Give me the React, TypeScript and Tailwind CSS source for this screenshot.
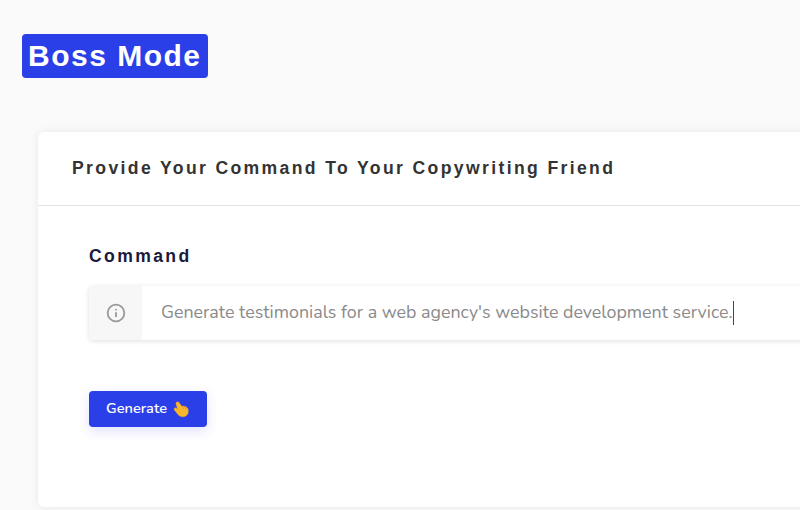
import { Info } from 'lucide-react';

function PointingHand() {
  return (
    <svg className="w-[18px] h-[18px]" viewBox="0 0 18 18" aria-hidden="true">
      <path
        d="M4.500 2.200c.8-.8 2-.6 2.600.3l2.400 3.600c2.500-.3 5 .5 6 2 1 1.600 1.200 4 .2 5.900-1 1.900-3 3-5.300 2.800-2.300-.1-4-1.300-5-3L2.300 10c-.5-.8-.3-1.700.4-2.100.7-.4 1.500-.2 2 .4l1 1.100L4.300 5c-.5-.9-.5-2.100.2-2.800z"
        fill="#f8b62d"
        stroke="#e59e1f"
        strokeWidth="0.4"
      />
      <path d="M10.800 6.800l.8 1.800M13.200 7.500l.6 1.600" stroke="#d98e16" strokeWidth="0.7" strokeLinecap="round" fill="none" />
    </svg>
  );
}

export default function App() {
  return (
    <div className="w-[800px] h-[510px] overflow-hidden bg-[#fafafa] font-['Nunito','Lato',sans-serif]">
      <div className="pt-[34px] pl-[22px]">
        <h1 className="inline-block h-[44px] px-[6px] rounded-[4px] bg-[#2b3fe8] text-white text-[30px] leading-[44px] font-bold tracking-[1.5px] font-['Liberation_Sans',sans-serif]">
          Boss Mode
        </h1>
      </div>

      <div className="mt-[54px] ml-[38px] w-[1000px] h-[375px] bg-white rounded-[6px] shadow-[0_0_8px_rgba(0,0,0,0.08)]">
        <div className="h-[74px] pl-[34px] flex items-center border-b border-[#e3e3e3]">
          <h2 className="text-[17.6px] font-bold tracking-[2.36px] text-[#333333] font-['Liberation_Sans',sans-serif]">
            Provide Your Command To Your Copywriting Friend
          </h2>
        </div>

        <div className="pt-[39px] pl-[51px]">
          <label className="block text-[17.6px] leading-[22px] font-bold tracking-[2.36px] text-[#1a1a3c] font-['Liberation_Sans',sans-serif]">
            Command
          </label>

          <div className="mt-[19px] w-[900px] h-[54px] flex rounded-[4px] bg-white shadow-[0_1px_5px_rgba(0,0,0,0.13)]">
            <div className="w-[53px] flex items-center justify-center bg-[#f7f7f7] rounded-l-[4px]">
              <Info className="w-[20px] h-[20px] text-[#999999]" strokeWidth={2.2} />
            </div>
            <div className="pl-[19px] pb-[1px] flex items-center text-[17.85px] text-[#8a8a8a]">
              <span>Generate testimonials for a web agency's website development service.</span>
              <span className="w-px h-[24px] bg-[#444444]" />
            </div>
          </div>

          <button className="mt-[51px] w-[118px] h-[36px] pb-[1px] flex items-center justify-center gap-[5px] rounded-[4px] bg-[#2b3fe8] text-white text-[14.6px] font-semibold shadow-[0_4px_12px_rgba(43,63,232,0.15)]">
            Generate
            <PointingHand />
          </button>
        </div>
      </div>
    </div>
  );
}
